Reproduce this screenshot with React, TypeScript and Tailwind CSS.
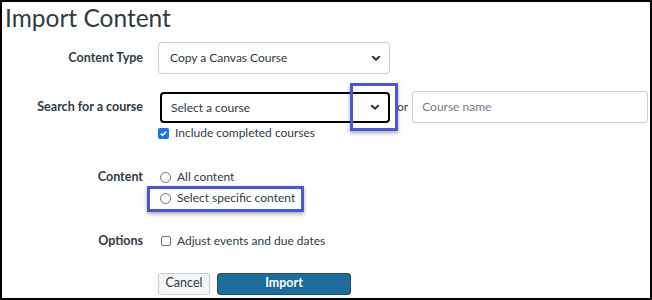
import React from 'react';

const FONT = { fontFamily: 'Lato, "Open Sans", Arial, sans-serif' };

function Chevron() {
  return (
    <svg width="10" height="7" viewBox="0 0 10 7" className="shrink-0">
      <path d="M1.8 1.8 L5 4.8 L8.2 1.8" fill="none" stroke="#2d3b45" strokeWidth="2" strokeLinecap="round" strokeLinejoin="round" />
    </svg>
  );
}

function Label({ children }: { children: React.ReactNode }) {
  return <div className="w-[141px] shrink-0 text-right font-bold text-[12.5px] text-[#2d3b45]">{children}</div>;
}

function Radio({ label }: { label: string }) {
  return (
    <div className="flex items-center h-[16px]">
      <span className="w-[11px] h-[11px] rounded-full border border-[#6b7780] bg-white shrink-0" />
      <span className="ml-[6px] text-[12px] text-[#2d3b45]">{label}</span>
    </div>
  );
}

export default function App() {
  return (
    <div style={FONT} className="relative w-[652px] h-[300px] border-2 border-black bg-white overflow-hidden text-[#2d3b45]">
      <h1 className="ml-[3px] mt-[1px] text-[24.5px] leading-[30px] font-normal text-[#2d3b45]">Import Content</h1>

      {/* content type */}
      <div className="flex items-center mt-[9px]">
        <Label>Content Type</Label>
        <div className="ml-[15px] w-[232px] h-[32px] flex items-center justify-between pl-[11px] pr-[8px] border border-[#c7cdd1] rounded-[4px] text-[12px]">
          <span>Copy a Canvas Course</span>
          <Chevron />
        </div>
      </div>

      {/* search */}
      <div className="flex items-start mt-[18px]">
        <Label><div className="mt-[6px]">Search for a course</div></Label>
        <div className="ml-[17px] flex flex-col">
          <div className="w-[230px] h-[31px] flex items-center justify-between pl-[9px] pr-[8px] border-2 border-black rounded-[4px] text-[12px]">
            <span>Select a course</span>
            <Chevron />
          </div>
          <div className="flex items-center mt-[1px] -ml-[2px]">
            <span className="w-[11px] h-[11px] rounded-[2px] bg-[#1a73e8] flex items-center justify-center shrink-0">
              <svg width="9" height="9" viewBox="0 0 9 9">
                <path d="M1.8 4.6 L3.7 6.4 L7.3 2.5" fill="none" stroke="white" strokeWidth="1.6" />
              </svg>
            </span>
            <span className="ml-[6px] text-[12px]">Include completed courses</span>
          </div>
        </div>
        <span className="ml-[7px] mt-[6px] text-[12px]">or</span>
        <div className="ml-[4px] -mt-[1px] w-[236px] h-[32px] flex items-center pl-[9px] border border-[#c7cdd1] rounded-[3px] text-[12px] text-[#707c85]">
          Course name
        </div>
      </div>

      {/* content */}
      <div className="flex items-start mt-[27px]">
        <Label><div className="leading-[16px]">Content</div></Label>
        <div className="ml-[17px] flex flex-col gap-[5px]">
          <Radio label="All content" />
          <Radio label="Select specific content" />
        </div>
      </div>

      {/* options */}
      <div className="flex items-center mt-[26px]">
        <Label>Options</Label>
        <div className="ml-[18px] flex items-center">
          <span className="w-[10px] h-[10px] rounded-[2px] border border-[#6b7780] shrink-0" />
          <span className="ml-[6px] text-[12px]">Adjust events and due dates</span>
        </div>
      </div>

      {/* buttons */}
      <div className="flex ml-[156px] mt-[22px] gap-[7px]">
        <button className="w-[52px] h-[22px] border border-[#c7cdd1] rounded-[3px] bg-[#f5f5f5] text-[12.5px] text-[#2d3b45] flex items-center justify-center">
          Cancel
        </button>
        <button className="w-[134px] h-[22px] border border-[#1d4f6e] rounded-[3px] bg-[#1f6b9c] text-[12.5px] font-bold text-white flex items-center justify-center">
          Import
        </button>
      </div>

      {/* highlight boxes */}
      <div className="absolute left-[348px] top-[81px] w-[48px] h-[48px] border-[3px] border-[#4757d6] shadow-[0_2px_4px_rgba(0,0,0,0.35)]" />
      <div className="absolute left-[145px] top-[184px] w-[157px] h-[26px] border-[3px] border-[#4757d6] shadow-[0_2px_4px_rgba(0,0,0,0.35)]" />
    </div>
  );
}
